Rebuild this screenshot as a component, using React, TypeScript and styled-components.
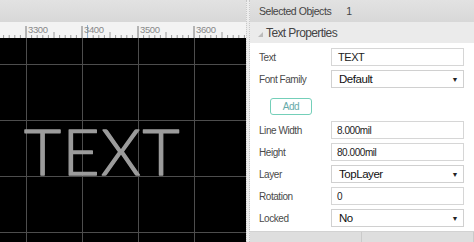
import styled, { createGlobalStyle } from "styled-components";

const GRID = [26, 82, 138, 194];
const RULER_LABELS = ["3300", "3400", "3500", "3600"];
const SANS = `"Liberation Sans", Arial, sans-serif`;

const GlobalStyle = createGlobalStyle`
  html, body {
    margin: 0;
    padding: 0;
    background: #fff;
  }
  body {
    font-family: ${SANS};
    letter-spacing: -0.45px;
  }
`;

type Field =
  | { kind: "input"; label: string; value: string }
  | { kind: "select"; label: string; value: string }
  | { kind: "button"; label: string };

const FIELDS: Field[] = [
  { kind: "input", label: "Text", value: "TEXT" },
  { kind: "select", label: "Font Family", value: "Default" },
  { kind: "button", label: "Add" },
  { kind: "input", label: "Line Width", value: "8.000mil" },
  { kind: "input", label: "Height", value: "80.000mil" },
  { kind: "select", label: "Layer", value: "TopLayer" },
  { kind: "input", label: "Rotation", value: "0" },
  { kind: "select", label: "Locked", value: "No" },
];

function RulerTicks() {
  const ticks = [];
  for (let i = -4; i <= 40; i++) {
    const x = 26 + i * 5.6;
    const major = i % 10 === 0;
    const mid = !major && i % 5 === 0;
    const h = major ? 12 : mid ? 6 : 3;
    ticks.push(
      <line key={i} x1={x} x2={x} y1={16 - h} y2={16} stroke={major ? "#777" : "#999"} strokeWidth={1} />
    );
  }
  return (
    <svg width="246" height="16">
      {ticks}
      <line x1={87.5} x2={87.5} y1={3} y2={16} stroke="#8fb0d0" strokeWidth={1} />
      {RULER_LABELS.map((t, i) => (
        <text key={t} x={GRID[i] + 2} y={11} fontSize="9.5" fill="#888" fontFamily={SANS} letterSpacing="-0.4">
          {t}
        </text>
      ))}
    </svg>
  );
}

function Board() {
  return (
    <svg width="246" height="204">
      <rect width="246" height="204" fill="#000" />
      {GRID.map((g) => (
        <line key={"v" + g} x1={g + 0.5} x2={g + 0.5} y1={0} y2={204} stroke="#4d4d4d" strokeWidth={1} />
      ))}
      {GRID.map((g) => (
        <line key={"h" + g} x1={0} x2={246} y1={g + 0.5} y2={g + 0.5} stroke="#4d4d4d" strokeWidth={1} />
      ))}
      <text
        x={24}
        y={137}
        fontSize="64"
        fontWeight={300}
        fill="#9c9c9c"
        stroke="#9c9c9c"
        strokeWidth={1.3}
        strokeLinejoin="round"
        fontFamily="Lato, 'DejaVu Sans', sans-serif"
        textLength={155}
        lengthAdjust="spacing"
      >
        TEXT
      </text>
    </svg>
  );
}

export default function App() {
  return (
    <>
      <GlobalStyle />
      <Screen>
        <Workspace>
          <TopBar />
          <Ruler>
            <RulerTicks />
          </Ruler>
          <Canvas>
            <Board />
          </Canvas>
        </Workspace>
        <Splitter />
        <Panel>
          <PanelHeader>
            <span>Selected Objects</span>
            <Count>1</Count>
          </PanelHeader>
          <SectionHeader>
            <Caret />
            Text Properties
          </SectionHeader>
          <Form>
            {FIELDS.map((f) =>
              f.kind === "button" ? (
                <ButtonRow key={f.label}>
                  <AddButton>{f.label}</AddButton>
                </ButtonRow>
              ) : (
                <Row key={f.label}>
                  <Label>{f.label}</Label>
                  {f.kind === "input" ? (
                    <Input $wide={f.label === "Text"}>{f.value}</Input>
                  ) : (
                    <Select>
                      <span>{f.value}</span>
                      <Arrow>▼</Arrow>
                    </Select>
                  )}
                </Row>
              )
            )}
          </Form>
          <BottomBar>
            <Tab />
            <Tab />
          </BottomBar>
        </Panel>
      </Screen>
    </>
  );
}

const Screen = styled.div`
  width: 474px;
  height: 242px;
  display: flex;
  overflow: hidden;
`;

const Workspace = styled.div`
  width: 246px;
  display: flex;
  flex-direction: column;
`;

const TopBar = styled.div`
  height: 22px;
  background: linear-gradient(#e2e2e2, #d8d8d8);
`;

const Ruler = styled.div`
  height: 16px;
  background: #f3f3f3;
  display: flex;
`;

const Canvas = styled.div`
  flex: 1;
  background: #000;
  display: flex;
`;

const Splitter = styled.div`
  width: 5px;
  background: #ececec;
  border-left: 1px dotted #c8c8c8;
  border-right: 1px dotted #c8c8c8;
  box-sizing: border-box;
`;

const Panel = styled.div`
  flex: 1;
  display: flex;
  flex-direction: column;
  background: #fff;
`;

const PanelHeader = styled.div`
  height: 22px;
  display: flex;
  align-items: center;
  padding-left: 9px;
  font-size: 10.5px;
  color: #444;
  background: linear-gradient(#e2e2e2, #d8d8d8);
`;

const Count = styled.span`
  margin-left: 15px;
`;

const SectionHeader = styled.div`
  height: 21px;
  display: flex;
  align-items: center;
  padding-left: 8px;
  font-size: 12px;
  letter-spacing: -0.6px;
  color: #444;
  background: #ebebeb;
`;

const Caret = styled.span`
  width: 0;
  height: 0;
  margin-right: 3px;
  margin-top: 3px;
  border-left: 5px solid transparent;
  border-bottom: 5px solid #bbb;
`;

const Form = styled.div`
  flex: 1;
  display: flex;
  flex-direction: column;
  gap: 4px;
  padding: 5px 10px 0 9px;
`;

const Row = styled.div`
  height: 18px;
  display: flex;
  align-items: center;
`;

const Label = styled.div`
  width: 72px;
  font-size: 10px;
  color: #4a4a4a;
`;

const Input = styled.div<{ $wide?: boolean }>`
  flex: 1;
  height: 18px;
  box-sizing: border-box;
  border: 1px solid #d6d6d6;
  display: flex;
  align-items: center;
  padding-left: ${(p) => (p.$wide ? 6 : 5)}px;
  font-size: ${(p) => (p.$wide ? 11 : 10)}px;
  color: #222;
`;

const Select = styled(Input)`
  justify-content: space-between;
  padding: 0 5px 0 7px;
  font-size: 11.5px;
  color: #111;
  border-color: #d0d0d0;
`;

const Arrow = styled.span`
  font-size: 7px;
  color: #222;
`;

const ButtonRow = styled.div`
  display: flex;
  padding: 6px 0 2px 11px;
`;

const AddButton = styled.div`
  width: 42px;
  height: 17px;
  box-sizing: border-box;
  border: 1px solid #74cfb9;
  border-radius: 3px;
  display: flex;
  align-items: center;
  justify-content: center;
  font-size: 10px;
  color: #6aa;
`;

const BottomBar = styled.div`
  height: 10px;
  display: flex;
  background: #dedede;
  border-top: 1px solid #d2d2d2;
`;

const Tab = styled.div`
  width: 111px;
  border-right: 1px solid #cacaca;
`;
